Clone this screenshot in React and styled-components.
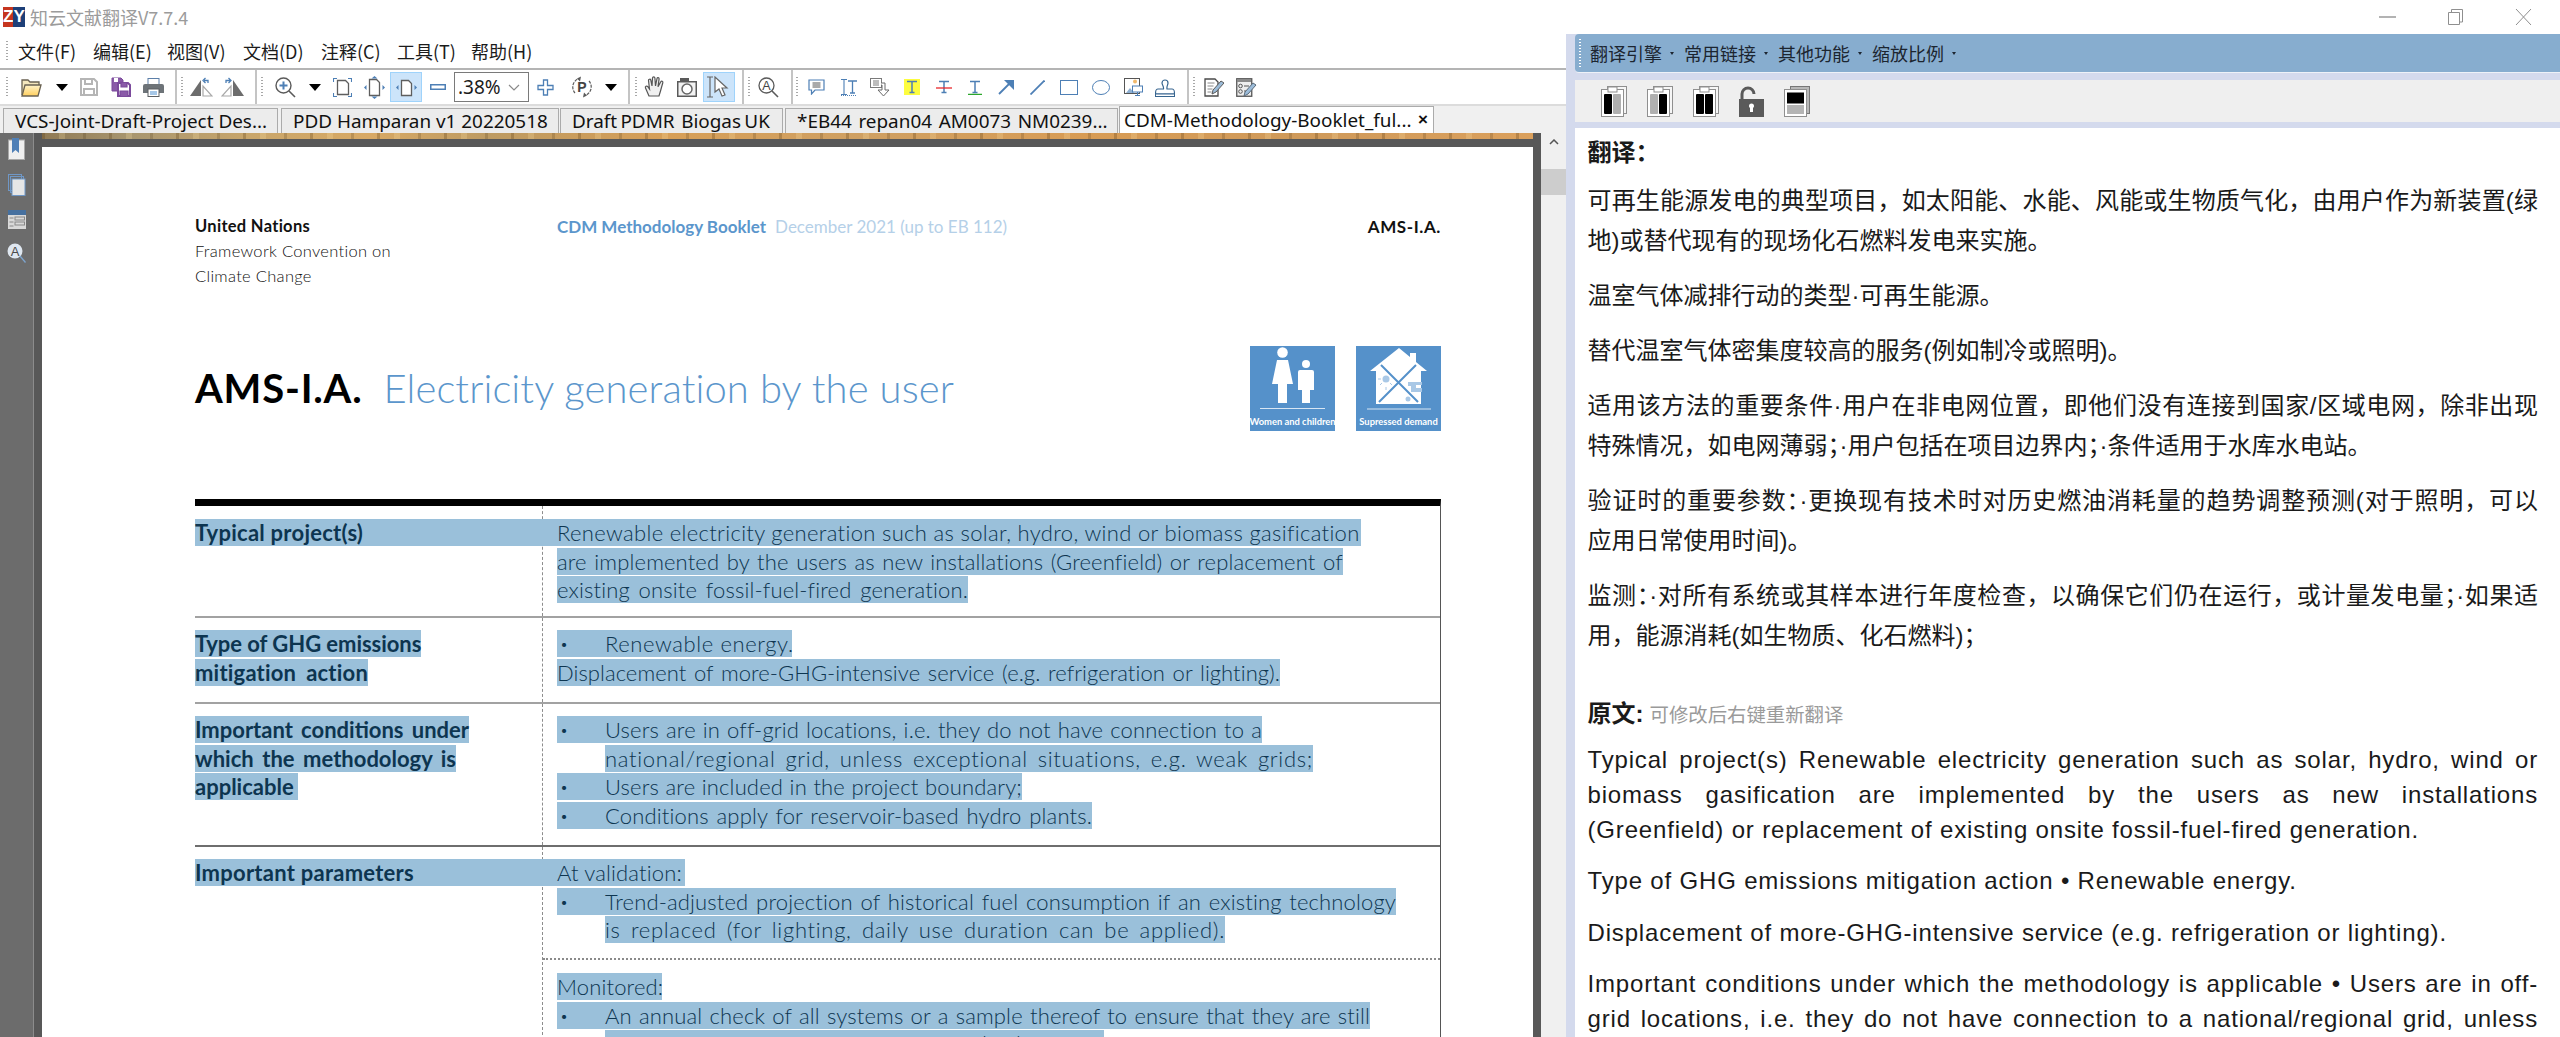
import React from "react";
import styled, { createGlobalStyle } from "styled-components";

const GlobalStyle = createGlobalStyle`
  html, body { margin: 0; padding: 0; background: #fff; }
  #root { width: 2560px; height: 1037px; overflow: hidden; }
`;

const UI_FONT = `"Noto Sans", "Noto Sans CJK SC", sans-serif`;
const CJK_FONT = `"Noto Sans CJK SC", "Liberation Sans", sans-serif`;
const READ_FONT = `"Liberation Sans", "Noto Sans CJK SC", sans-serif`;
const DOC_FONT = `Lato, "Open Sans", sans-serif`;
const BLUE = "#4d7fb5";

const Window = styled.div`
  width: 2560px;
  height: 1037px;
  display: flex;
  flex-direction: column;
  overflow: hidden;
  background: #fff;
`;

const TitleBar = styled.div`
  height: 34px;
  flex: none;
  display: flex;
  align-items: center;
  padding-left: 3px;
`;

const Logo = styled.div`
  display: flex;
  width: 21px;
  height: 20px;
  margin-right: 6px;
  font: 700 17px/20px "Liberation Sans", sans-serif;
  color: #fff;
  text-align: center;
`;

const LogoPart = styled.span`
  flex: 1;
  background: ${(p) => p.$bg};
`;

const AppTitle = styled.div`
  font: 18px/34px ${CJK_FONT};
  color: #9b9b9b;
  width: 162px;
  white-space: nowrap;
`;

const WindowButtons = styled.div`
  margin-left: auto;
  display: flex;
  align-items: center;
  gap: 52px;
  padding-right: 28px;
  svg { display: block; }
`;

const Main = styled.div`
  flex: 1;
  min-height: 0;
  display: flex;
`;

const Reader = styled.div`
  width: 1566px;
  flex: none;
  display: flex;
  flex-direction: column;
`;

const MenuBar = styled.div`
  height: 36px;
  box-sizing: border-box;
  flex: none;
  display: flex;
  align-items: center;
  border-bottom: 2px solid #b4b4b4;
  padding-left: 6px;
`;

const Grip = styled.div`
  width: 2px;
  height: ${(p) => p.$h || 21}px;
  flex: none;
  background: repeating-linear-gradient(to bottom, #a8a8a8 0 1px, transparent 1px 3px);
`;

const MenuItem = styled.div`
  font: 18px/34px ${CJK_FONT};
  color: #1b1b1b;
  width: ${(p) => p.$w}px;
  margin-left: ${(p) => p.$gap}px;
  white-space: nowrap;
`;

const ToolBar = styled.div`
  height: 36px;
  box-sizing: border-box;
  flex: none;
  display: flex;
  align-items: center;
  border-bottom: 2px solid #dcdcdc;
  padding-left: 6px;
`;

const Tool = styled.div`
  flex: none;
  width: ${(p) => p.$w}px;
  margin-left: ${(p) => p.$gap}px;
  height: 30px;
  display: flex;
  align-items: center;
  justify-content: center;
  box-sizing: border-box;
  ${(p) => p.$active && "background: #cce4fa; border: 1px solid #9fd3fb;"}
  svg { display: block; flex: none; }
`;

const Divider = styled.div`
  width: 2px;
  height: 34px;
  flex: none;
  margin-left: ${(p) => p.$gap}px;
  background: #c4c4c4;
`;

const ZoomBox = styled.div`
  flex: none;
  width: 75px;
  height: 30px;
  margin-left: ${(p) => p.$gap}px;
  box-sizing: border-box;
  border: 1px solid #7a7a7a;
  display: flex;
  align-items: center;
  justify-content: space-between;
  padding: 0 8px 0 3px;
  font: 19px/28px "Noto Sans", sans-serif;
  color: #1b1b1b;
`;

const TabBar = styled.div`
  height: 27px;
  flex: none;
  display: flex;
  align-items: flex-end;
  background: #f0f0f0;
  padding-left: 3px;
`;

const Tab = styled.div`
  flex: none;
  box-sizing: border-box;
  width: ${(p) => p.$w}px;
  height: ${(p) => (p.$active ? 27 : 25)}px;
  margin-left: ${(p) => p.$gap || 0}px;
  border: 1px solid #ababab;
  border-bottom: 0;
  background: ${(p) => (p.$active ? "#fff" : "#ececec")};
  padding-left: ${(p) => (p.$active ? 4 : 11)}px;
  display: flex;
  align-items: center;
  justify-content: space-between;
  font: 18.9px/24px ${UI_FONT};
  word-spacing: ${(p) => (p.$tight ? "-1.6px" : "0")};
  color: #111;
  white-space: pre;
  overflow: hidden;
`;

const TabClose = styled.span`
  font: 700 17px/24px "Liberation Sans", sans-serif;
  padding-right: 5px;
`;

const Viewer = styled.div`
  flex: 1;
  min-height: 0;
  display: flex;
`;

const SideBar = styled.div`
  width: 33px;
  flex: none;
  background: #6c6c6c;
  border-right: 1px solid #8c8c8c;
  display: flex;
  flex-direction: column;
  align-items: center;
  padding-top: 5px;
  gap: 14px;
  svg { display: block; }
`;

const DocArea = styled.div`
  flex: 1;
  min-width: 0;
  background: #585858;
  padding: 0 8px 0 8px;
  overflow: hidden;
`;

const TextureStrip = styled.div`
  height: 6px;
  background:
    repeating-linear-gradient(to right, rgba(90, 60, 20, 0.28) 0 3px, transparent 3px 17px, rgba(255, 230, 170, 0.22) 17px 23px, transparent 23px 41px, rgba(70, 50, 20, 0.2) 41px 44px, transparent 44px 67px),
    linear-gradient(to right, #8f7a55 0, #a89670 6%, #c9a66b 14%, #d8a965 22%, #bd9b63 30%, #d79f58 42%, #cfa063 55%, #d89c55 70%, #cf9a5b 85%, #dba05c 100%);
  margin-bottom: 8px;
`;

const Page = styled.div`
  background: #fff;
  height: 1000px;
  padding: 67px 92px 0 153px;
  font-family: ${DOC_FONT};
  color: #111;
`;

const DocHeader = styled.div`
  display: flex;
  font-size: 17px;
  line-height: 25px;
`;

const DocOrg = styled.div`
  width: 362px;
  flex: none;
  font-weight: 300;
  font-size: 16.5px;
  letter-spacing: 0.3px;
`;

const DocStrong = styled.div`
  font-weight: 700;
`;

const DocBooklet = styled.div`
  flex: 1;
  color: #b5d0e8;
  font-weight: 400;
  b {
    color: #5b96cc;
    font-weight: 700;
    margin-right: 9px;
  }
`;

const DocCode = styled.div`
  font-weight: 700;
  letter-spacing: 0.6px;
`;

const TitleRow = styled.div`
  display: flex;
  align-items: center;
  margin-top: 57px;
  height: 85px;
`;

const DocTitle = styled.div`
  flex: 1;
  font-size: 40px;
  line-height: 50px;
  font-weight: 300;
  color: #5b96cc;
  letter-spacing: 0.1px;
  padding-bottom: 2px;
  b {
    color: #000;
    font-weight: 700;
    margin-right: 21px;
    letter-spacing: 0.8px;
  }
`;

const Tile = styled.div`
  width: 85px;
  height: 85px;
  flex: none;
  margin-left: ${(p) => p.$gap}px;
  background: #5591ca;
  display: flex;
  flex-direction: column;
  align-items: center;
  svg { display: block; flex: none; }
`;

const TileCaption = styled.div`
  color: #fff;
  font: 700 9.4px/19px ${DOC_FONT};
  white-space: nowrap;
`;

const Table = styled.div`
  margin-top: 68px;
  border-top: 7px solid #000;
  border-right: 1px solid #555;
`;

const Row = styled.div`
  display: grid;
  grid-template-columns: 348px 1fr;
  box-sizing: border-box;
  height: ${(p) => p.$h}px;
  border-bottom: 2px solid ${(p) => p.$line || "#a2a2a2"};
`;

const LabelCell = styled.div`
  border-right: 1px dashed #8d8d8d;
  padding-top: ${(p) => p.$top}px;
  font-weight: 700;
`;

const ValueCell = styled.div`
  padding-left: 14px;
  font-weight: 300;
  display: flex;
  flex-direction: column;
`;

const Block = styled.div`
  padding-top: ${(p) => p.$top}px;
  height: ${(p) => p.$h}px;
  box-sizing: border-box;
  margin-left: ${(p) => (p.$dotted ? "-14px" : "0")};
  padding-left: ${(p) => (p.$dotted ? "14px" : "0")};
  border-bottom: ${(p) => (p.$dotted ? "2px dotted #8a8a8a" : "none")};
`;

const Line = styled.div`
  height: 28.5px;
`;

const Mark = styled.div`
  display: flex;
  box-sizing: border-box;
  height: 27px;
  width: ${(p) => p.$w}px;
  margin-left: ${(p) => p.$offset || 0}px;
  padding-left: ${(p) => p.$pad || 0}px;
  background: #9ac0da;
  color: #0d3550;
  font-size: 22px;
  letter-spacing: ${(p) => p.$sp}px;
  line-height: 27px;
  white-space: nowrap;
`;

const BulletDot = styled.span`
  width: 48px;
  flex: none;
  padding-left: 3px;
  box-sizing: border-box;
  font-size: 14px;
`;

const Fit = styled.span`
  flex: 1;
  min-width: 0;
  text-align: ${(p) => (p.$free ? "left" : "justify")};
  text-align-last: ${(p) => (p.$free ? "left" : "justify")};
`;

const TextLine = ({ from = 557, to, bullet, bleed, free, sp = 0.15, children }) => {
  const col = bleed ? 543 : 557;
  return (
    <Line>
      <Mark $w={to - col} $offset={bleed ? -14 : from - 557} $pad={bleed ? 14 : 0} $sp={sp}>
        {bullet && <BulletDot>•</BulletDot>}
        <Fit $free={free}>{children}</Fit>
      </Mark>
    </Line>
  );
};

const LabelLine = ({ to, free, sp = 0, children }) => (
  <Line>
    <Mark $w={to - 195} $sp={sp}>
      <Fit $free={free}>{children}</Fit>
    </Mark>
  </Line>
);

const ScrollBar = styled.div`
  width: 25px;
  flex: none;
  background: #f0f0f0;
  display: flex;
  flex-direction: column;
`;

const ScrollUp = styled.div`
  height: 36px;
  display: flex;
  justify-content: center;
  padding-top: 6px;
  box-sizing: border-box;
  svg { display: block; }
`;

const ScrollThumb = styled.div`
  height: 26px;
  background: #cdcdcd;
`;

const Panel = styled.div`
  flex: 1;
  min-width: 0;
  background: #d4daed;
  padding-left: 9px;
  display: flex;
  flex-direction: column;
`;

const PanelMenu = styled.div`
  height: 39px;
  flex: none;
  background: #87adcf;
  border-radius: 4px 0 0 4px;
  border-bottom: 1px solid #eef2f8;
  box-sizing: border-box;
  display: flex;
  align-items: center;
  padding-left: 4px;
`;

const PanelGrip = styled.div`
  width: 2px;
  height: 28px;
  flex: none;
  margin-right: 9px;
  background: repeating-linear-gradient(to bottom, #fff 0 1px, transparent 1px 3px);
`;

const PanelMenuItem = styled.div`
  width: 94px;
  flex: none;
  font: 18px/38px ${CJK_FONT};
  color: #1c2530;
  display: flex;
  align-items: center;
  &::after {
    content: "";
    margin-left: 8px;
    border-left: 2.5px solid transparent;
    border-right: 2.5px solid transparent;
    border-top: 3px solid #1c2530;
  }
`;

const PanelTools = styled.div`
  height: 42px;
  flex: none;
  margin-top: 7px;
  background: #efefef;
  display: flex;
  align-items: center;
  padding-left: 26px;
  gap: 20px;
  svg { display: block; }
`;

const Reading = styled.div`
  flex: 1;
  min-height: 0;
  margin-top: 6px;
  background: #fff;
  padding: 5px 22px 0 12.5px;
  overflow: hidden;
  color: #1a1a1a;
`;

const Heading = styled.div`
  font: 700 24px/40px ${READ_FONT};
  margin-top: ${(p) => p.$top || 0}px;
  margin-bottom: ${(p) => p.$bottom || 0}px;
  span {
    font-size: 19.4px;
    font-weight: 400;
    color: #9a9a9a;
    margin-left: 6px;
  }
`;

const Para = styled.p`
  margin: 0 0 15px;
  font: 24px/40px ${READ_FONT};
  text-align: justify;
`;

const SourcePara = styled.p`
  margin: 0 0 16.4px;
  font: 24px/35px "Liberation Sans", sans-serif;
  letter-spacing: 0.83px;
  text-align: justify;
`;

/* ---- toolbar drawings ---- */

const Caret = () => (
  <svg width="12" height="7" viewBox="0 0 12 7">
    <path d="M0 0h12L6 7z" fill="#000" />
  </svg>
);

const Folder = () => (
  <svg width="21" height="19" viewBox="0 0 21 19">
    <defs>
      <linearGradient id="fold" x1="0" y1="0" x2="0" y2="1">
        <stop offset="0" stopColor="#fff3c9" />
        <stop offset="1" stopColor="#ffcf5e" />
      </linearGradient>
    </defs>
    <path d="M1 17V2h6l2 2h9v3" fill="#f4e7bd" stroke="#6a6252" strokeWidth="1.3" />
    <path d="M1 18 4 7h16l-3 11z" fill="url(#fold)" stroke="#6a6252" strokeWidth="1.3" />
  </svg>
);

const Disk = ({ color }) => (
  <svg width="18" height="18" viewBox="0 0 18 18">
    <path d="M1 1h13l3 3v13H1z" fill="none" stroke={color} strokeWidth="2" />
    <path d="M5 1v5h7V1M4 17v-6h10v6" fill="none" stroke={color} strokeWidth="2" />
  </svg>
);

const DiskPair = () => (
  <svg width="20" height="20" viewBox="0 0 20 20">
    <path d="M1 1h9l2 2v2H7v9H1z" fill="#8a5aa8" stroke="#7b4a9c" />
    <path d="M3 1v4h4V1" fill="#fff" />
    <path d="M7 6h10l2 2v11H7z" fill="#fff" stroke="#7b4a9c" strokeWidth="2" />
    <path d="M10 6v4h6V6M9 19v-5h8v5" fill="#8a5aa8" stroke="#7b4a9c" strokeWidth="1.2" />
  </svg>
);

const Printer = () => (
  <svg width="21" height="19" viewBox="0 0 21 19">
    <rect x="5" y="0.5" width="11" height="6" fill="#fff" stroke="#5c7fa8" />
    <path d="M2 6h17a2 2 0 0 1 2 2v7H16v-3H5v3H0V8a2 2 0 0 1 2-2z" fill="#6d7378" />
    <rect x="5" y="11" width="11" height="7.5" fill="#fff" stroke="#5b5f63" />
    <path d="M7 14h7M7 16h7" stroke="#4d8fd0" />
  </svg>
);

const Flip = ({ mirror }) => (
  <svg width="23" height="20" viewBox="0 0 23 20" style={mirror ? { transform: "scaleX(-1)" } : undefined}>
    <path d="M11 3v16H0z" fill="#6c6c6c" />
    <path d="M13 9v10h9z" fill="#fff" stroke="#a8a8a8" strokeWidth="1.2" />
    <path d="M18 6V3.5h-4M15.5 1 13 3.5 15.500 6" fill="none" stroke={BLUE} strokeWidth="1.3" />
  </svg>
);

const ZoomIn = () => (
  <svg width="21" height="21" viewBox="0 0 21 21">
    <circle cx="8.5" cy="8.5" r="7.5" fill="#fff" stroke="#5a5a5a" strokeWidth="1.4" />
    <path d="M14 14l6 6" stroke="#5a5a5a" strokeWidth="1.6" />
    <path d="M8.5 4.5v8M4.5 8.5h8" stroke={BLUE} strokeWidth="2" />
  </svg>
);

const FitPage = () => (
  <svg width="19" height="19" viewBox="0 0 19 19">
    <path d="M4.5 2.5h8l3 3v11h-11z" fill="#fff" stroke="#5e5e5e" strokeWidth="1.3" />
    <path d="M.5 4V.5H4M15 .5h3.5V4M.5 15v3.5H4M15 18.5h3.5V15" fill="none" stroke={BLUE} strokeWidth="1.1" />
  </svg>
);

const FitHeight = () => (
  <svg width="21" height="23" viewBox="0 0 21 23">
    <path d="M5.5 3.5h7l3 3v13h-10z" fill="#fff" stroke="#5e5e5e" strokeWidth="1.3" />
    <path d="M10.5 0l3 2.5h-6zM10.5 23l3-2.5h-6zM0 11.5L2.5 9v5zM21 11.5L18.5 9v5z" fill={BLUE} />
  </svg>
);

const FitWidth = () => (
  <svg width="21" height="19" viewBox="0 0 21 19">
    <path d="M5.5 2.5h7l3 3v12h-10z" fill="#fff" stroke="#5e5e5e" strokeWidth="1.3" />
    <path d="M0 9.5L2.5 7v5zM21 9.5L18.5 7v5z" fill={BLUE} />
  </svg>
);

const Minus = () => (
  <svg width="16" height="6" viewBox="0 0 16 6">
    <rect x="0.75" y="0.75" width="14.5" height="4.5" fill="#fff" stroke={BLUE} strokeWidth="1.5" />
  </svg>
);

const Plus = () => (
  <svg width="17" height="17" viewBox="0 0 17 17">
    <path d="M6.5 1h4v5.5H16v4h-5.500V16h-4v-5.500H1v-4h5.500z" fill="#fff" stroke={BLUE} strokeWidth="1.3" />
  </svg>
);

const Chevron = () => (
  <svg width="12" height="7" viewBox="0 0 12 7">
    <path d="M1 1l5 5 5-5" fill="none" stroke="#8a8a8a" strokeWidth="1.2" />
  </svg>
);

const RotateP = () => (
  <svg width="22" height="22" viewBox="0 0 22 22">
    <path d="M4 17A9 9 0 0 1 8 2.500M18 5A9 9 0 0 1 14 19.500" fill="none" stroke="#5a5a5a" strokeWidth="1.2" strokeDasharray="3 1.2" />
    <path d="M10 .5 6 2.500l3 3zM12 21.500l4-2-3-3z" fill="#5a5a5a" />
    <text x="11" y="16" textAnchor="middle" fontFamily="Liberation Sans, sans-serif" fontWeight="700" fontSize="14" fill="#444">P</text>
  </svg>
);

const Hand = () => (
  <svg width="21" height="22" viewBox="0 0 21 22">
    <path d="M5 20 1.500 12c-.7-1.500 1.300-2.500 2.300-1.300L5.500 13 4.500 4.500c-.2-1.500 2-1.800 2.300-.3L8 10 8.500 2c.1-1.500 2.300-1.500 2.400 0L11.500 10l1.500-7.500c.3-1.400 2.300-1 2.100.4L14 10.800l2.800-5c.7-1.200 2.500-.4 2 1L16.500 15 15 20z" fill="#f0f0f0" stroke="#555" strokeWidth="1.2" />
  </svg>
);

const Camera = () => (
  <svg width="20" height="19" viewBox="0 0 20 19">
    <rect x="3" y="0" width="9" height="4" fill="#5a5a5a" />
    <rect x="0.75" y="3.750" width="18.500" height="14.500" fill="#f2f2f2" stroke="#5a5a5a" strokeWidth="1.500" />
    <circle cx="10" cy="11" r="5" fill="#fff" stroke="#666" strokeWidth="1.500" />
  </svg>
);

const SelectTool = () => (
  <svg width="26" height="22" viewBox="0 0 26 22">
    <path d="M1 1h6M1 21h6M4 1v20" fill="none" stroke="#666" strokeWidth="1.200" />
    <path d="M9 1v15l4-3 3 7 3-1-3-7h5z" fill="#fff" stroke="#666" strokeWidth="1.200" />
  </svg>
);

const SearchA = () => (
  <svg width="21" height="21" viewBox="0 0 21 21">
    <circle cx="8.500" cy="8.500" r="7.500" fill="#fff" stroke="#5a5a5a" strokeWidth="1.300" />
    <path d="M14 14l6 6" stroke="#5a5a5a" strokeWidth="1.600" />
    <text x="8.500" y="13" textAnchor="middle" fontFamily="Liberation Sans, sans-serif" fontSize="12.500" fill="#444">A</text>
  </svg>
);

const Comment = () => (
  <svg width="17" height="16" viewBox="0 0 17 16">
    <path d="M1 1h15v10H7l-3.500 4V11H1z" fill="#fff" stroke={BLUE} strokeWidth="1.200" />
    <path d="M4.500 4h8M4.500 6h8M4.500 8h8" stroke="#555" />
  </svg>
);

const TextSelect = () => (
  <svg width="18" height="18" viewBox="0 0 18 18">
    <path d="M1 1.500h6M1 16.500h6M4 1.500v15" fill="none" stroke={BLUE} strokeWidth="1.100" />
    <path d="M8 3h9M12.500 3v12M10 15h5" fill="none" stroke={BLUE} strokeWidth="1.300" />
    <path d="M1 17.500h16" stroke={BLUE} strokeDasharray="1 1" />
  </svg>
);

const DocDown = () => (
  <svg width="20" height="19" viewBox="0 0 20 19">
    <rect x="0.500" y="0.500" width="11" height="9" fill="#fff" stroke="#7a7a7a" />
    <path d="M3 3h6M3 5h6M3 7h6" stroke="#7a7a7a" />
    <path d="M11 5h4v7h4l-5.500 6L8 12h4V7h-1" fill="#fff" stroke="#6a6a6a" />
  </svg>
);

const MarkT = ({ bg, rule, color = BLUE }) => (
  <svg width="16" height="16" viewBox="0 0 16 16">
    {bg && <rect width="16" height="16" fill={bg} />}
    <path d="M3 2.500h10M8 2.500v10.500M5.500 13.500h5" fill="none" stroke={color} strokeWidth="1.500" />
    {rule && <path d={rule.d} stroke={rule.c} strokeWidth="1.300" />}
  </svg>
);

const Arrow = () => (
  <svg width="16" height="16" viewBox="0 0 16 16">
    <path d="M1 15 13 3" stroke={BLUE} strokeWidth="1.800" />
    <path d="M6 1h10v10z" fill={BLUE} />
  </svg>
);

const Slash = () => (
  <svg width="15" height="15" viewBox="0 0 15 15">
    <path d="M.5 14.500 14.500.500" stroke={BLUE} strokeWidth="1.800" />
  </svg>
);

const Square = () => (
  <svg width="18" height="15" viewBox="0 0 18 15">
    <rect x="0.500" y="0.500" width="17" height="14" fill="#fff" stroke={BLUE} />
  </svg>
);

const Ellipse = () => (
  <svg width="18" height="15" viewBox="0 0 18 15">
    <ellipse cx="9" cy="7.500" rx="8.500" ry="7" fill="#fff" stroke={BLUE} />
  </svg>
);

const ImageScreen = () => (
  <svg width="19" height="18" viewBox="0 0 19 18">
    <rect x="0.500" y="0.500" width="15" height="15" fill="#fff" stroke="#555" />
    <circle cx="11" cy="3.500" r="2" fill="#f2b96b" />
    <path d="M2 15l4-5 4 5z" fill="#8fb0d2" />
    <rect x="8.500" y="8" width="10" height="6" fill="#fff" stroke={BLUE} />
    <path d="M13.500 14v3M11 17.500h5" stroke={BLUE} />
  </svg>
);

const Stamp = () => (
  <svg width="20" height="19" viewBox="0 0 20 19">
    <path d="M7 5a3 3 0 1 1 6 0c0 2-1.500 3-1 6h5c2 0 2.500 1 2.500 5H.500c0-4 .5-5 2.500-5h5.500C9 8 7 7 7 5z" fill="#fff" stroke="#37658f" strokeWidth="1.200" />
    <rect x="0.500" y="16" width="19" height="2.500" fill="#fff" stroke="#37658f" />
  </svg>
);

const EditDoc = () => (
  <svg width="20" height="19" viewBox="0 0 20 19">
    <path d="M1 1h10l3 3v14H1z" fill="#fff" stroke="#4a4a4a" strokeWidth="1.300" />
    <path d="M3.500 5h7M3.500 8h6M3.500 11h5M3.500 14h4" stroke="#8a8a8a" />
    <path d="M8 16l1-4 8-9 3 2-8 9z" fill="#9cbcd9" stroke="#5a5a5a" />
  </svg>
);

const CheckDoc = () => (
  <svg width="21" height="19" viewBox="0 0 21 19">
    <rect x="0.750" y="0.750" width="15" height="17.500" fill="#eee" stroke="#555" strokeWidth="1.300" />
    <rect x="1" y="1" width="14" height="3" fill="#8a8a8a" />
    <circle cx="4.500" cy="8" r="1.800" fill="none" stroke="#555" />
    <circle cx="4.500" cy="13.500" r="1.800" fill="none" stroke="#555" />
    <path d="M8 8h5M8 13h2" stroke="#555" />
    <path d="M8 18l1-4 8-9 3 2-8 9z" fill="#9cbcd9" stroke="#5a6a7a" />
  </svg>
);

/* ---- side bar and panel drawings ---- */

const SideBookmark = () => (
  <svg width="17" height="22" viewBox="0 0 17 22">
    <rect x="0.500" y="2" width="16" height="19.500" fill="#efefef" stroke="#a8a8a8" />
    <path d="M4 0h7v15l-3.500-3L4 15z" fill="#4f7fb6" />
  </svg>
);

const SidePages = () => (
  <svg width="18" height="22" viewBox="0 0 18 22">
    <rect x="0.500" y="0.500" width="13" height="16" fill="none" stroke="#6f97c6" />
    <rect x="2.500" y="2.500" width="13" height="16" fill="none" stroke="#6f97c6" />
    <rect x="4" y="5" width="13" height="16.500" fill="#e6e6e6" stroke="#6f97c6" />
  </svg>
);

const SideList = () => (
  <svg width="18" height="19" viewBox="0 0 18 19">
    <rect width="18" height="19" fill="#d9d9d9" />
    <rect width="18" height="5" fill="#46709f" />
    <path d="M1.500 8h4M1.500 12h4M1.500 16h4" stroke="#888" />
    <rect x="7" y="7" width="9.500" height="3" fill="none" stroke="#888" />
    <rect x="7" y="12" width="9.500" height="3" fill="none" stroke="#888" />
  </svg>
);

const SideSearch = () => (
  <svg width="19" height="20" viewBox="0 0 19 20">
    <circle cx="8" cy="8" r="7.500" fill="#dfe7f0" />
    <path d="M13 13l5.500 6.500" stroke="#7da4cd" strokeWidth="1.300" />
    <text x="8" y="13" textAnchor="middle" fontFamily="Liberation Sans, sans-serif" fontSize="13" fill="#4a4a4a">A</text>
  </svg>
);

const SplitDoc = ({ left, right }) => (
  <svg width="26" height="31" viewBox="0 0 26 31">
    <rect x="6.500" y="0.500" width="19" height="27" fill="#f6f6f6" stroke="#8f8f8f" />
    <rect x="0.500" y="3.500" width="22" height="27" fill="#fff" stroke="#8f8f8f" />
    <rect x="7" y="1" width="9" height="5" fill="#fff" stroke="#8f8f8f" />
    <rect x="3" y="8" width="8" height="20" rx="1" fill={left} />
    <rect x="12" y="8" width="8" height="20" rx="1" fill={right} />
  </svg>
);

const StackDoc = () => (
  <svg width="26" height="31" viewBox="0 0 26 31">
    <rect x="6.500" y="0.500" width="19" height="27" fill="#b8b8b8" stroke="#777" />
    <rect x="0.500" y="3.500" width="22" height="27" fill="#fff" stroke="#8f8f8f" />
    <rect x="3" y="6.500" width="17" height="11" fill="#000" />
    <rect x="3" y="19" width="17" height="9" fill="#b4b4b4" />
  </svg>
);

const OpenLock = () => (
  <svg width="25" height="31" viewBox="0 0 25 31">
    <path d="M3 14V8a6 6 0 0 1 12 0" fill="none" stroke="#5a5a5a" strokeWidth="3" />
    <rect y="13" width="25" height="18" fill="#5a5a5a" />
    <path d="M10 20a2.500 2.500 0 0 1 5 0c0 1-.5 1.500-1 2v4h-3v-4c-.5-.5-1-1-1-2z" fill="#fff" />
  </svg>
);

const WomenTile = () => (
  <svg width="85" height="66" viewBox="0 0 85 66">
    <circle cx="32.500" cy="6.500" r="5.300" fill="#fff" />
    <path d="M27 14h11l5 24h-6v19h-9V38h-6z" fill="#fff" />
    <circle cx="56" cy="18" r="4" fill="#fff" />
    <path d="M50 24h12a2 2 0 0 1 2 2v18h-4v13h-8V44h-4V26a2 2 0 0 1 2-2z" fill="#fff" />
    <path d="M10 62.500h65" stroke="#d7e5f3" />
  </svg>
);

const HouseTile = () => (
  <svg width="85" height="66" viewBox="0 0 85 66">
    <path d="M43 2l11 9V7h6v9l11 9h-6v33H20V25h-6z" fill="#fff" />
    <circle cx="30" cy="33" r="3.500" fill="#a9c8e6" />
    <path d="M22 33h3M30 41v3M24 39l2-2M36 39l-2-2" stroke="#a9c8e6" />
    <path d="M52 36h14v3h-6v3h6v4H55v-6h-3z" fill="#a9c8e6" />
    <circle cx="52" cy="53" r="2.500" fill="#a9c8e6" />
    <path d="M25 19l37 37M60 19L23 56" stroke="#5591ca" strokeWidth="2" />
    <path d="M11 63h64" stroke="#d7e5f3" />
  </svg>
);

const Tabs = [
  { w: 275, text: "VCS-Joint-Draft-Project Des..." },
  { w: 278, gap: 3, text: "PDD Hamparan v1 20220518" },
  { w: 223, gap: 1, tight: true, text: "Draft PDMR  Biogas UK" },
  { w: 333, gap: 2, tight: true, text: "*EB44  repan04  AM0073  NM0239..." },
];

const Menus = [
  ["文件(F)", 58, 10],
  ["编辑(E)", 57, 17],
  ["视图(V)", 59, 17],
  ["文档(D)", 61, 17],
  ["注释(C)", 59, 17],
  ["工具(T)", 57, 17],
  ["帮助(H)", 61, 17],
];

const PanelMenus = ["翻译引擎", "常用链接", "其他功能", "缩放比例"];

export default function App() {
  return (
    <>
      <GlobalStyle />
      <Window>
        <TitleBar>
          <Logo>
            <LogoPart $bg="#c6351f">Z</LogoPart>
            <LogoPart $bg="#1d3f78">Y</LogoPart>
          </Logo>
          <AppTitle>知云文献翻译V7.7.4</AppTitle>
          <WindowButtons>
            <svg width="17" height="2" viewBox="0 0 17 2">
              <path d="M0 1h17" stroke="#9a9a9a" strokeWidth="1.500" />
            </svg>
            <svg width="15" height="16" viewBox="0 0 15 16">
              <path d="M3.500 3V.5h11V13H12M.5 3.500h11v12H.5z" fill="none" stroke="#8f8f8f" />
            </svg>
            <svg width="17" height="16" viewBox="0 0 17 16">
              <path d="M1 0l15 16M16 0 1 16" stroke="#8f8f8f" />
            </svg>
          </WindowButtons>
        </TitleBar>
        <Main>
          <Reader>
            <MenuBar>
              <Grip />
              {Menus.map(([label, w, gap]) => (
                <MenuItem key={label} $w={w} $gap={gap}>
                  {label}
                </MenuItem>
              ))}
            </MenuBar>
            <ToolBar>
              <Tool $w={2} $gap={0}><Grip /></Tool>
              <Tool $w={21} $gap={13}><Folder /></Tool>
              <Tool $w={12} $gap={14}><Caret /></Tool>
              <Tool $w={18} $gap={12}><Disk color="#b5b5b5" /></Tool>
              <Tool $w={20} $gap={13}><DiskPair /></Tool>
              <Tool $w={21} $gap={12}><Printer /></Tool>
              <Divider $gap={11} />
              <Tool $w={2} $gap={4}><Grip /></Tool>
              <Tool $w={23} $gap={7}><Flip /></Tool>
              <Tool $w={23} $gap={8}><Flip mirror /></Tool>
              <Divider $gap={11} />
              <Tool $w={2} $gap={4}><Grip /></Tool>
              <Tool $w={21} $gap={12}><ZoomIn /></Tool>
              <Tool $w={12} $gap={13}><Caret /></Tool>
              <Tool $w={19} $gap={12}><FitPage /></Tool>
              <Tool $w={21} $gap={12}><FitHeight /></Tool>
              <Tool $w={32} $gap={5} $active><FitWidth /></Tool>
              <Tool $w={16} $gap={8}><Minus /></Tool>
              <ZoomBox $gap={8}>
                .38%
                <Chevron />
              </ZoomBox>
              <Tool $w={17} $gap={8}><Plus /></Tool>
              <Tool $w={22} $gap={17}><RotateP /></Tool>
              <Tool $w={12} $gap={12}><Caret /></Tool>
              <Divider $gap={11} />
              <Tool $w={2} $gap={5}><Grip /></Tool>
              <Tool $w={21} $gap={7}><Hand /></Tool>
              <Tool $w={20} $gap={12}><Camera /></Tool>
              <Tool $w={32} $gap={6} $active><SelectTool /></Tool>
              <Divider $gap={7} />
              <Tool $w={2} $gap={4}><Grip /></Tool>
              <Tool $w={21} $gap={8}><SearchA /></Tool>
              <Divider $gap={12} />
              <Tool $w={2} $gap={3}><Grip /></Tool>
              <Tool $w={17} $gap={10}><Comment /></Tool>
              <Tool $w={18} $gap={15}><TextSelect /></Tool>
              <Tool $w={20} $gap={12}><DocDown /></Tool>
              <Tool $w={16} $gap={14}><MarkT bg="#fdfd3f" /></Tool>
              <Tool $w={16} $gap={16}><MarkT rule={{ d: "M0 9h16", c: "#e8272c" }} /></Tool>
              <Tool $w={16} $gap={15}><MarkT rule={{ d: "M1 15.400h14", c: "#2ca72c" }} /></Tool>
              <Tool $w={16} $gap={15}><Arrow /></Tool>
              <Tool $w={15} $gap={16}><Slash /></Tool>
              <Tool $w={18} $gap={15}><Square /></Tool>
              <Tool $w={18} $gap={14}><Ellipse /></Tool>
              <Tool $w={19} $gap={14}><ImageScreen /></Tool>
              <Tool $w={20} $gap={12}><Stamp /></Tool>
              <Divider $gap={12} />
              <Tool $w={2} $gap={4}><Grip /></Tool>
              <Tool $w={20} $gap={9}><EditDoc /></Tool>
              <Tool $w={21} $gap={12}><CheckDoc /></Tool>
            </ToolBar>
            <TabBar>
              {Tabs.map((t) => (
                <Tab key={t.text} $w={t.w} $gap={t.gap} $tight={t.tight}>
                  {t.text}
                </Tab>
              ))}
              <Tab $w={315} $gap={1} $active>
                CDM-Methodology-Booklet_ful...
                <TabClose>×</TabClose>
              </Tab>
            </TabBar>
            <Viewer>
              <SideBar>
                <SideBookmark />
                <SidePages />
                <SideList />
                <SideSearch />
              </SideBar>
              <DocArea>
                <TextureStrip />
                <Page>
                  <DocHeader>
                    <DocOrg>
                      <DocStrong>United Nations</DocStrong>
                      Framework Convention on
                      <br />
                      Climate Change
                    </DocOrg>
                    <DocBooklet>
                      <b>CDM Methodology Booklet</b>
                      December 2021 (up to EB 112)
                    </DocBooklet>
                    <DocCode>AMS-I.A.</DocCode>
                  </DocHeader>
                  <TitleRow>
                    <DocTitle>
                      <b>AMS-I.A.</b>
                      Electricity generation by the user
                    </DocTitle>
                    <Tile $gap={0}>
                      <WomenTile />
                      <TileCaption>Women and children</TileCaption>
                    </Tile>
                    <Tile $gap={21}>
                      <HouseTile />
                      <TileCaption>Supressed demand</TileCaption>
                    </Tile>
                  </TitleRow>
                  <Table>
                    <Row $h={112}>
                      <LabelCell $top={13}>
                        <LabelLine to={543} free sp={0.25}>Typical project(s)</LabelLine>
                      </LabelCell>
                      <ValueCell>
                        <Block $top={13}>
                          <TextLine to={1361} bleed free sp={0.33}>Renewable electricity generation such as solar, hydro, wind or biomass gasification</TextLine>
                          <TextLine to={1343}>are implemented by the users as new installations (Greenfield) or replacement of</TextLine>
                          <TextLine to={968}>existing onsite fossil-fuel-fired generation.</TextLine>
                        </Block>
                      </ValueCell>
                    </Row>
                    <Row $h={86}>
                      <LabelCell $top={12}>
                        <LabelLine to={421} sp={-0.05}>Type of GHG emissions</LabelLine>
                        <LabelLine to={368} sp={0.2}>mitigation action</LabelLine>
                      </LabelCell>
                      <ValueCell>
                        <Block $top={12}>
                          <TextLine to={792} bullet sp={0.6}>Renewable energy.</TextLine>
                          <TextLine to={1280} sp={0.05}>Displacement of more-GHG-intensive service (e.g. refrigeration or lighting).</TextLine>
                        </Block>
                      </ValueCell>
                    </Row>
                    <Row $h={143} $line="#6e6e6e">
                      <LabelCell $top={12}>
                        <LabelLine to={469}>Important conditions under</LabelLine>
                        <LabelLine to={456}>which the methodology is</LabelLine>
                        <LabelLine to={298}>applicable</LabelLine>
                      </LabelCell>
                      <ValueCell>
                        <Block $top={12}>
                          <TextLine to={1262} bullet>Users are in off-grid locations, i.e.  they do not have connection to a</TextLine>
                          <TextLine from={605} to={1265} sp={0.7}>national/regional grid, unless exceptional situations, e.g. weak grids;</TextLine>
                          <TextLine to={1022} bullet>Users are included in the project boundary;</TextLine>
                          <TextLine to={1092} bullet>Conditions apply for reservoir-based hydro plants.</TextLine>
                        </Block>
                      </ValueCell>
                    </Row>
                    <Row $h={300} $line="transparent">
                      <LabelCell $top={12}>
                        <LabelLine to={543} free sp={0.25}>Important parameters</LabelLine>
                      </LabelCell>
                      <ValueCell>
                        <Block $top={12} $h={113} $dotted>
                          <TextLine to={685} bleed free>At validation:</TextLine>
                          <TextLine to={1396} bullet>Trend-adjusted projection of historical fuel consumption if an existing technology</TextLine>
                          <TextLine from={605} to={1177} sp={0.7}>is replaced (for lighting, daily use duration can be applied).</TextLine>
                        </Block>
                        <Block $top={13}>
                          <TextLine to={662}>Monitored:</TextLine>
                          <TextLine to={1370} bullet>An annual check of all systems or a sample thereof to ensure that they are still</TextLine>
                          <TextLine from={605} to={1056}>operating or metering of generated electricity;</TextLine>
                        </Block>
                      </ValueCell>
                    </Row>
                  </Table>
                </Page>
              </DocArea>
              <ScrollBar>
                <ScrollUp>
                  <svg width="10" height="6" viewBox="0 0 10 6">
                    <path d="M1 5l4-4 4 4" fill="none" stroke="#555" strokeWidth="1.500" />
                  </svg>
                </ScrollUp>
                <ScrollThumb />
              </ScrollBar>
            </Viewer>
          </Reader>
          <Panel>
            <PanelMenu>
              <PanelGrip />
              {PanelMenus.map((m) => (
                <PanelMenuItem key={m}>{m}</PanelMenuItem>
              ))}
            </PanelMenu>
            <PanelTools>
              <SplitDoc left="#000" right="#b0b0b0" />
              <SplitDoc left="#b0b0b0" right="#000" />
              <SplitDoc left="#000" right="#000" />
              <OpenLock />
              <StackDoc />
            </PanelTools>
            <Reading>
              <Heading $bottom={8}>翻译：</Heading>
              <Para>可再生能源发电的典型项目，如太阳能、水能、风能或生物质气化，由用户作为新装置(绿地)或替代现有的现场化石燃料发电来实施。</Para>
              <Para>温室气体减排行动的类型·可再生能源。</Para>
              <Para>替代温室气体密集度较高的服务(例如制冷或照明)。</Para>
              <Para>适用该方法的重要条件·用户在非电网位置，即他们没有连接到国家/区域电网，除非出现特殊情况，如电网薄弱；·用户包括在项目边界内；·条件适用于水库水电站。</Para>
              <Para>{"验证时的重要参数：·更换现有技术时对历史燃油消耗量的趋势调整预测(对于照明，可以应\u2060用日常使用时间)。"}</Para>
              <Para>监测：·对所有系统或其样本进行年度检查，以确保它们仍在运行，或计量发电量；·如果适用，能源消耗(如生物质、化石燃料)；</Para>
              <Heading $top={38} $bottom={7}>
                原文:<span>可修改后右键重新翻译</span>
              </Heading>
              <SourcePara>Typical project(s) Renewable electricity generation such as solar, hydro, wind or biomass gasification are implemented by the users as new installations (Greenfield) or replacement of existing onsite fossil-fuel-fired generation.</SourcePara>
              <SourcePara>Type of GHG emissions mitigation action • Renewable energy.</SourcePara>
              <SourcePara>Displacement of more-GHG-intensive service (e.g. refrigeration or lighting).</SourcePara>
              <SourcePara>Important conditions under which the methodology is applicable • Users are in off-grid locations, i.e. they do not have connection to a national/regional grid, unless exceptional situations, e.g. weak grids; • Users are included in the project boundary;</SourcePara>
            </Reading>
          </Panel>
        </Main>
      </Window>
    </>
  );
}
